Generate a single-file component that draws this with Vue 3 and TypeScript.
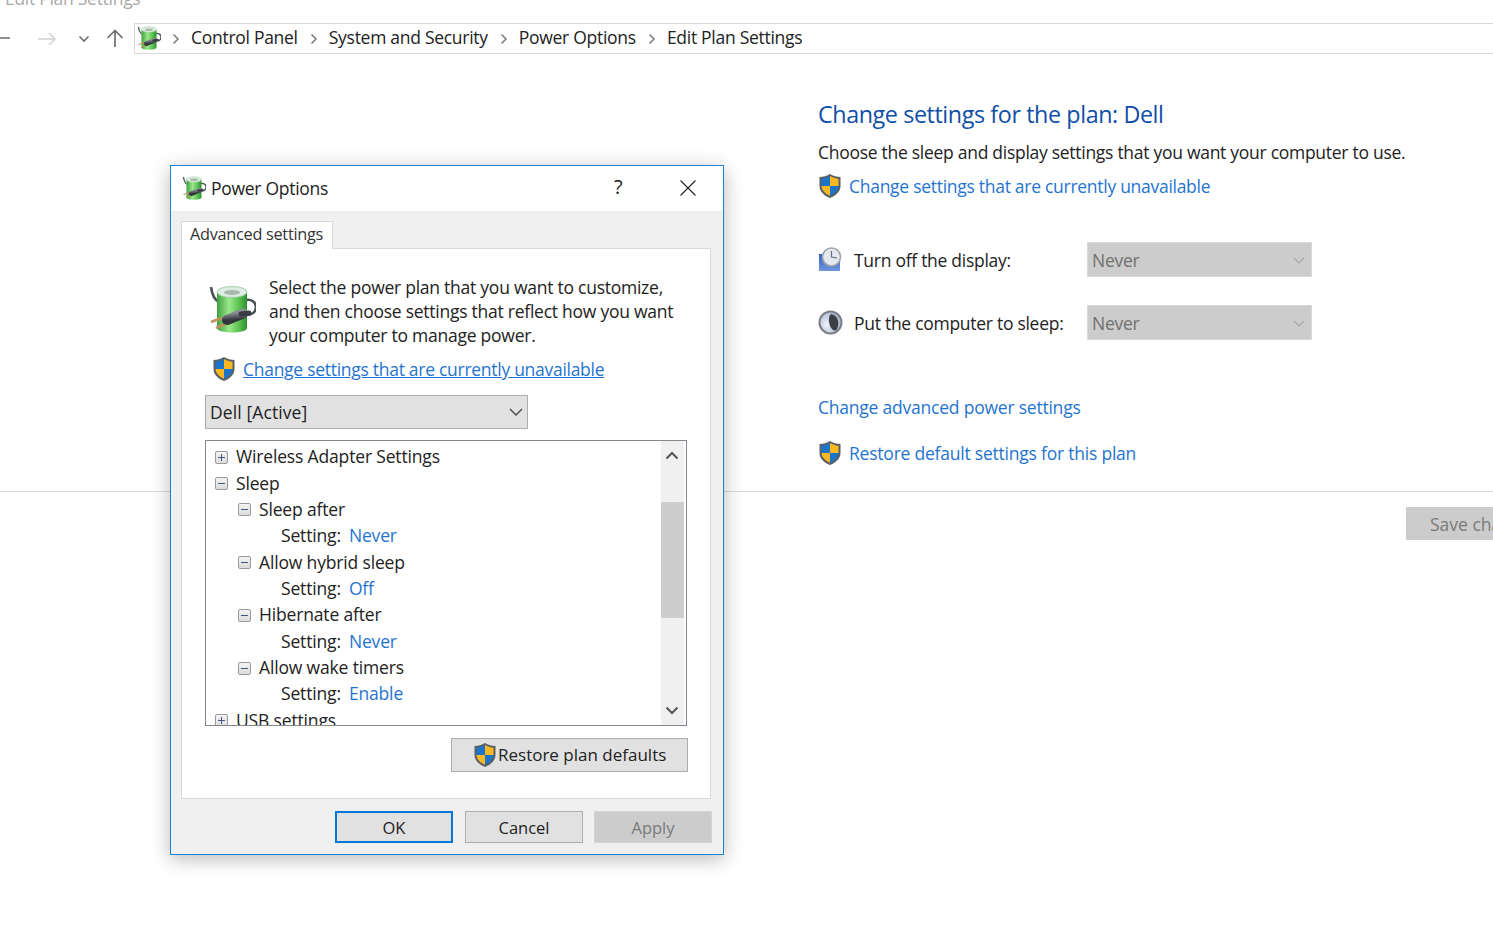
<template>
  <div class="page">
    <svg class="defs" width="0" height="0" aria-hidden="true">
      <defs>
        <linearGradient id="green" x1="0" x2="1" y1="0" y2="0">
          <stop offset="0" stop-color="#3f9f3f" />
          <stop offset="0.4" stop-color="#9be88a" />
          <stop offset="0.75" stop-color="#58c04f" />
          <stop offset="1" stop-color="#2c8f30" />
        </linearGradient>
        <linearGradient id="plug" x1="0" x2="0.2" y1="0" y2="1">
          <stop offset="0" stop-color="#8a8f95" />
          <stop offset="1" stop-color="#33363b" />
        </linearGradient>
        <linearGradient id="screen" x1="0" x2="0" y1="0" y2="1">
          <stop offset="0" stop-color="#2f62c0" />
          <stop offset="1" stop-color="#6f97dd" />
        </linearGradient>
        <radialGradient id="moon" cx="0.35" cy="0.6" r="0.7">
          <stop offset="0" stop-color="#eef2fa" />
          <stop offset="1" stop-color="#a3b2d2" />
        </radialGradient>
        <symbol id="shield" viewBox="0 0 24 26">
          <path d="M12 1 C9 3 5 4 1.500 4 V13 C1.500 19 7 23 12 25 C17 23 22.500 19 22.500 13 V4 C19 4 15 3 12 1 Z" fill="#5b5f66" />
          <path d="M12 3 C9.500 4.500 6.500 5.500 3.500 5.700 V13 H12 Z" fill="#1a74c8" />
          <path d="M12 3 C14.500 4.500 17.500 5.500 20.500 5.700 V13 H12 Z" fill="#f9b820" />
          <path d="M3.500 13 H12 V22.700 C8 21 3.800 18 3.500 13 Z" fill="#f9b820" />
          <path d="M20.500 13 H12 V22.700 C16 21 20.200 18 20.500 13 Z" fill="#1a74c8" />
        </symbol>
        <symbol id="battery" viewBox="3 6 48 50">
          <path d="M6 8 C7 15 9 21 14 23" fill="none" stroke="#4a5058" stroke-width="2.600" />
          <path d="M41 21 C46 20 51 23 51 28 C51 33 47 36 42 36" fill="none" stroke="#4a5058" stroke-width="2.600" />
          <path d="M12 13 H42 V49 C42 55 12 55 12 49 Z" fill="url(#green)" />
          <ellipse cx="27" cy="13" rx="15" ry="5.500" fill="#dfeee2" stroke="#8fc79a" stroke-width="0.800" />
          <ellipse cx="27" cy="13.500" rx="8" ry="2.500" fill="#aab8ae" />
          <path d="M17 39 L6 43 M20 45 L11 49" stroke="#c0905a" stroke-width="2.600" />
          <path d="M22 41 L38 34.500" stroke="url(#plug)" stroke-width="10" stroke-linecap="round" fill="none" />
          <path d="M36 35 L44 34" stroke="#3a3e44" stroke-width="5" stroke-linecap="round" />
        </symbol>
      </defs>
    </svg>

    <div class="window-title">Edit Plan Settings</div>

    <div class="nav">
      <div class="nav-buttons">
        <svg class="back" width="12" height="12" viewBox="0 0 12 12"><path d="M0 6 H12" stroke="#555" stroke-width="1.300" /></svg>
        <svg class="forward" width="20" height="14" viewBox="0 0 20 14"><path d="M1 7 H18 M12 1 L18 7 L12 13" fill="none" stroke="#d2d2d2" stroke-width="1.500" /></svg>
        <svg class="down" width="12" height="8" viewBox="0 0 12 8"><path d="M1.500 1.500 L6 6 L10.500 1.500" fill="none" stroke="#6e6e6e" stroke-width="1.600" /></svg>
        <svg class="up" width="18" height="18" viewBox="0 0 18 18"><path d="M9 18 V2 M1.500 9 L9 1.500 L16.500 9" fill="none" stroke="#6e6e6e" stroke-width="1.700" /></svg>
      </div>
      <div class="address">
        <svg class="address-icon" width="24" height="25"><use href="#battery" /></svg>
        <template v-for="crumb in crumbs" :key="crumb">
          <svg class="chev" width="8" height="12" viewBox="0 0 8 12"><path d="M1.500 1.500 L6 6 L1.500 10.500" fill="none" stroke="#7a7a7a" stroke-width="1.500" /></svg>
          <span class="crumb">{{ crumb }}</span>
        </template>
      </div>
    </div>

    <div class="content">
      <h1 class="heading">Change settings for the plan: Dell</h1>
      <p class="intro">Choose the sleep and display settings that you want your computer to use.</p>
      <div class="link-row first">
        <svg width="24" height="26"><use href="#shield" /></svg>
        <a class="link">Change settings that are currently unavailable</a>
      </div>

      <div class="setting display-row">
        <svg class="setting-icon" width="25" height="25" viewBox="0 0 25 25">
          <rect x="1" y="7" width="21" height="17" fill="url(#screen)" />
          <circle cx="13.500" cy="10" r="9" fill="#e3e9f0" stroke="#a0a4a8" stroke-width="1.600" />
          <path d="M13.500 4 V10 L19 11" fill="none" stroke="#6a7078" stroke-width="1.200" />
        </svg>
        <span class="setting-label">Turn off the display:</span>
        <div class="fake-select">Never<svg width="12" height="7" viewBox="0 0 12 7"><path d="M1 1 L6 6 L11 1" fill="none" stroke="#a8a8a8" stroke-width="1.200" /></svg></div>
      </div>
      <div class="setting sleep-row">
        <svg class="setting-icon" width="25" height="25" viewBox="0 0 25 25">
          <circle cx="12.500" cy="12.500" r="11" fill="url(#moon)" stroke="#7b7f85" stroke-width="2" />
          <path d="M13 4 C20 5 22 13 19 19 C17 22 14 20 12.500 17 C10.500 12 10 7 13 4 Z" fill="#3c3f44" />
        </svg>
        <span class="setting-label">Put the computer to sleep:</span>
        <div class="fake-select">Never<svg width="12" height="7" viewBox="0 0 12 7"><path d="M1 1 L6 6 L11 1" fill="none" stroke="#a8a8a8" stroke-width="1.200" /></svg></div>
      </div>

      <a class="link advanced">Change advanced power settings</a>
      <div class="link-row restore">
        <svg width="24" height="26"><use href="#shield" /></svg>
        <a class="link">Restore default settings for this plan</a>
      </div>
    </div>

    <div class="footer">
      <button class="save">Save changes</button>
    </div>

    <div class="dialog">
      <div class="titlebar">
        <svg width="24" height="25"><use href="#battery" /></svg>
        <span class="dialog-title">Power Options</span>
        <span class="help">?</span>
        <svg class="close" width="16" height="16" viewBox="0 0 16 16"><path d="M0.500 0.500 L15.500 15.500 M15.500 0.500 L0.500 15.500" stroke="#222" stroke-width="1.100" /></svg>
      </div>
      <div class="dialog-body">
        <div class="tab">Advanced settings</div>
        <div class="panel">
          <div class="blurb">
            <svg width="48" height="50"><use href="#battery" /></svg>
            <p>Select the power plan that you want to customize, and then choose settings that reflect how you want your computer to manage power.</p>
          </div>
          <div class="panel-link">
            <svg width="24" height="26"><use href="#shield" /></svg>
            <a class="link underlined">Change settings that are currently unavailable</a>
          </div>
          <div class="plan-select">
            Dell [Active]
            <svg width="14" height="8" viewBox="0 0 14 8"><path d="M1 1 L7 7 L13 1" fill="none" stroke="#444" stroke-width="1.300" /></svg>
          </div>
          <div class="tree">
            <div class="tree-rows">
              <div v-for="row in rows" :key="row.key" class="tree-row" :class="'level-' + row.level">
                <span v-if="row.toggle" class="toggle" :class="{ plus: row.toggle === 'plus' }"></span>
                <span>{{ row.label }}</span>
                <span v-if="row.value" class="value">{{ row.value }}</span>
              </div>
            </div>
            <div class="scrollbar">
              <svg class="arrow" width="14" height="9" viewBox="0 0 14 9"><path d="M1.500 7.500 L7 2 L12.500 7.500" fill="none" stroke="#555" stroke-width="2" /></svg>
              <div class="track"><div class="thumb"></div></div>
              <svg class="arrow" width="14" height="9" viewBox="0 0 14 9"><path d="M1.500 1.500 L7 7 L12.500 1.500" fill="none" stroke="#555" stroke-width="2" /></svg>
            </div>
          </div>
          <div class="restore-wrap">
            <button class="restore-btn">
              <svg width="24" height="26"><use href="#shield" /></svg>
              <span class="restore-text">Restore plan defaults</span>
            </button>
          </div>
        </div>
        <div class="dialog-actions">
          <button class="action ok">OK</button>
          <button class="action">Cancel</button>
          <button class="action disabled">Apply</button>
        </div>
      </div>
    </div>
  </div>
</template>

<script setup lang="ts">
type Row = {
  key: string
  level: number
  label: string
  toggle?: 'plus' | 'minus'
  value?: string
}

const crumbs = ['Control Panel', 'System and Security', 'Power Options', 'Edit Plan Settings']

const rows: Row[] = [
  { key: 'wireless', level: 0, label: 'Wireless Adapter Settings', toggle: 'plus' },
  { key: 'sleep', level: 0, label: 'Sleep', toggle: 'minus' },
  { key: 'after', level: 1, label: 'Sleep after', toggle: 'minus' },
  { key: 'after-v', level: 2, label: 'Setting:', value: 'Never' },
  { key: 'hybrid', level: 1, label: 'Allow hybrid sleep', toggle: 'minus' },
  { key: 'hybrid-v', level: 2, label: 'Setting:', value: 'Off' },
  { key: 'hibernate', level: 1, label: 'Hibernate after', toggle: 'minus' },
  { key: 'hibernate-v', level: 2, label: 'Setting:', value: 'Never' },
  { key: 'wake', level: 1, label: 'Allow wake timers', toggle: 'minus' },
  { key: 'wake-v', level: 2, label: 'Setting:', value: 'Enable' },
  { key: 'usb', level: 0, label: 'USB settings', toggle: 'plus' },
]
</script>

<style>
html, body { margin: 0; background: #fff; }
</style>

<style scoped>
.page { position: relative; width: 1493px; height: 942px; overflow: hidden; background: #fff; color: #222; font-family: "Open Sans", "Noto Sans", sans-serif; font-size: 17px; letter-spacing: -0.28px }
.defs { position: absolute }
.window-title { height: 23px; margin-top: -11px; padding-left: 5px; font-size: 17.500px; line-height: 18px; color: #a8a8a8 }
.nav { display: flex; height: 31px; margin-top: 11px }
.nav-buttons { width: 134px; flex: none; display: flex; align-items: center }
.back { margin-left: -2px; margin-top: -1px }
.forward { margin-left: 27px }
.down { margin-left: 21px }
.up { margin-left: 16px; margin-top: -2px }
.address { flex: 1; display: flex; align-items: center; border: 1px solid #d9d9d9; border-right: none; padding-left: 2px; box-sizing: border-box; height: 31px }
.address-icon { flex: none }
.chev { margin: 0 11px 0 11px; flex: none }
.crumb { font-size: 17.500px; margin-right: 1px; margin-top: -2px; white-space: nowrap; line-height: 1.200 }
.content { margin-left: 818px; padding-top: 43px; display: flex; flex-direction: column; align-items: flex-start; height: 383px; box-sizing: border-box }
.heading { margin: 0; font-weight: 400; font-size: 23.300px; line-height: 34px; color: #0f4fa8; letter-spacing: -0.4px }
.intro { margin: 10px 0 0; font-size: 17.500px; line-height: 23px; white-space: nowrap }
.link { color: #1f74d0; font-size: 17.500px; line-height: 24px; white-space: nowrap; cursor: pointer }
.link-row { display: flex; align-items: center; gap: 7px }
.link-row.first { margin-top: 9px; height: 26px }
.setting { display: flex; align-items: center; height: 35px }
.display-row { margin-top: 43px }
.sleep-row { margin-top: 28px }
.setting-icon { flex: none; margin-right: 11px }
.setting-label { width: 233px; flex: none; font-size: 17.500px; white-space: nowrap }
.fake-select { width: 225px; height: 35px; box-sizing: border-box; background: #cccccc; border: 1px solid #d9d9d9; display: flex; align-items: center; justify-content: space-between; padding: 1px 6px 0 4px; color: #707070; font-size: 17.500px }
.advanced { margin-top: 55px; letter-spacing: -0.22px }
.restore { margin-top: 21px; height: 26px }
.restore .link { letter-spacing: -0.22px }
.footer { height: 451px; margin-top: 54px; border-top: 1px solid #d9d9d9; padding: 15px 0 0 1406px; box-sizing: border-box }
.save { display: block; width: 150px; height: 33px; border: 1px solid #ccc; background: #cccccc; color: #7a7a7a; font: inherit; font-size: 17.500px; text-align: left; padding: 0 0 0 23px }

.dialog { position: absolute; left: 170px; top: 165px; width: 554px; height: 690px; box-sizing: border-box; border: 1px solid #1883d7; background: #f0f0f0; box-shadow: 0 4px 18px rgba(0,0,0,.28); display: flex; flex-direction: column }
.titlebar { height: 45px; flex: none; background: #fff; display: flex; align-items: center; padding-left: 11px }
.dialog-title { margin-left: 5px; font-size: 17.500px; width: 403px; flex: none; white-space: nowrap; margin-top: -1px }
.help { font-size: 20px; line-height: 1; flex: none; margin-top: -3px }
.close { margin-left: 58px; margin-top: -2px; flex: none }
.dialog-body { flex: 1; padding: 10px 12px 0 10px; display: flex; flex-direction: column; min-height: 0 }
.tab { align-self: flex-start; height: 28px; width: 152px; box-sizing: border-box; background: #fff; border: 1px solid #d9d9d9; border-bottom: none; font-size: 16.300px; line-height: 24px; padding-left: 8px; white-space: nowrap; color: #333; position: relative; z-index: 1; margin-bottom: -1px }
.panel { height: 551px; flex: none; box-sizing: border-box; background: #fff; border: 1px solid #d9d9d9; padding: 26px 23px 0 23px }
.blurb { display: flex; align-items: flex-start }
.blurb svg { flex: none; margin-top: 10px; margin-left: 3px; margin-right: 13px }
.blurb p { margin: 0; font-size: 17.500px; line-height: 24px; width: 415px; letter-spacing: -0.25px }
.panel-link { display: flex; align-items: center; gap: 7px; margin-top: 9px; margin-left: 7px; height: 26px }
.underlined { text-decoration: underline }
.plan-select { width: 323px; height: 34px; margin-top: 13px; box-sizing: border-box; background: #e1e1e1; border: 1px solid #adadad; display: flex; align-items: center; justify-content: space-between; padding: 0 4px 0 4px; font-size: 17.500px; letter-spacing: 0.1px }
.tree { margin-top: 11px; height: 286px; box-sizing: border-box; border: 1px solid #828790; display: flex; overflow: hidden; background: #fff }
.tree-rows { flex: 1; padding-top: 2px; min-width: 0 }
.tree-row { height: 26.360px; display: flex; align-items: center; font-size: 17.500px; white-space: nowrap; letter-spacing: -0.16px }
.level-0 { padding-left: 9px }
.level-1 { padding-left: 32px }
.level-2 { padding-left: 75px }
.toggle { position: relative; width: 13px; height: 13px; margin: 2px 8px 0 0; box-sizing: border-box; border: 1px solid #9a9a9a; border-radius: 2px; background: linear-gradient(#f4f4f4, #dcdcdc); flex: none }
.toggle::before { content: ""; position: absolute; left: 2px; right: 2px; top: 5px; height: 1px; background: #44587a }
.toggle.plus::after { content: ""; position: absolute; top: 2px; bottom: 2px; left: 5px; width: 1px; background: #44587a }
.value { color: #1f74d0; margin-left: 8px }
.scrollbar { width: 25px; flex: none; background: linear-gradient(90deg, #f0f0f0 23px, #fff 23px); display: flex; flex-direction: column; align-items: flex-start }
.arrow { flex: none; margin: 10px 0 10px 4px }
.track { flex: 1; width: 100%; padding-top: 32px; box-sizing: border-box }
.thumb { height: 116px; background: #cdcdcd; width: 23px }
.restore-wrap { display: flex; justify-content: flex-end; margin-top: 12px; margin-right: -1px }
.restore-btn { width: 237px; height: 34px; background: #e1e1e1; border: 1px solid #adadad; display: flex; align-items: center; justify-content: flex-start; padding: 0 0 0 21px; gap: 1px; font: inherit; font-size: 17px; color: #222 }
.restore-text { margin-top: -2px }
.dialog-actions { display: flex; justify-content: flex-end; margin-top: 12px; margin-right: -1px }
.action { width: 118px; height: 32px; box-sizing: border-box; background: #e1e1e1; border: 1px solid #adadad; font: inherit; font-size: 16.500px; color: #222; padding: 0 }
.action.ok { border: 2px solid #0078d7; margin-right: 12px }
.action.disabled { background: #cccccc; border-color: #d4d4d4; color: #7a7a7a; margin-left: 11px }
</style>
